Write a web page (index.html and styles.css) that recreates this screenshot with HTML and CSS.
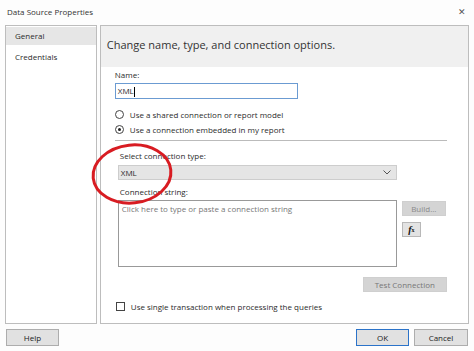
FILE: index.html
```html
<!DOCTYPE html>
<html lang="en">
<head>
    <meta charset="UTF-8">
    <title>Data Source Properties</title>
    <link rel="stylesheet" href="styles.css">
</head>
<body>
    <div class="dialog">
        <div class="title-bar">
            <span class="title">Data Source Properties</span>
            <span class="close">&#x2715;</span>
        </div>
        <div class="main">
            <div class="side">
                <div class="side-item selected">General</div>
                <div class="side-item">Credentials</div>
            </div>
            <div class="content">
                <div class="header">Change name, type, and connection options.</div>
                <div class="body">
                    <div class="label name-label">Name:</div>
                    <div class="name-input">XML<span class="caret"></span></div>
                    <div class="radio-row first"><span class="radio"></span>Use a shared connection or report model</div>
                    <div class="radio-row"><span class="radio checked"></span>Use a connection embedded in my report</div>
                    <div class="separator"></div>
                    <div class="group">
                        <div class="label">Select connection type:</div>
                        <div class="dropdown">
                            <span>XML</span>
                            <svg class="chevron" width="8" height="5" viewBox="0 0 8 5"><path d="M0.5 0.5 L4 4 L7.5 0.5" fill="none" stroke="#555" stroke-width="1"/></svg>
                        </div>
                        <div class="label conn-label">Connection string:</div>
                        <div class="conn-row">
                            <div class="conn-box">Click here to type or paste a connection string</div>
                            <div class="conn-buttons">
                                <div class="btn build">Build...</div>
                                <div class="btn fx"><i>f</i><sub>x</sub></div>
                            </div>
                        </div>
                        <div class="test-row">
                            <div class="btn test">Test Connection</div>
                        </div>
                    </div>
                    <div class="check-row"><span class="check"></span>Use single transaction when processing the queries</div>
                </div>
            </div>
        </div>
        <div class="footer">
            <div class="btn help">Help</div>
            <div class="spacer"></div>
            <div class="btn ok">OK</div>
            <div class="btn cancel">Cancel</div>
        </div>
        <svg class="circle" width="90" height="70" viewBox="0 0 90 70">
            <ellipse cx="45" cy="35" rx="39" ry="29" fill="none" stroke="#d81c22" stroke-width="3" transform="rotate(-6 45 35)"/>
        </svg>
    </div>
</body>
</html>
```

FILE: styles.css
```css
body {
    margin: 0;
    background-color: #ffffff;
    font-family: 'Open Sans', 'Noto Sans', sans-serif;
    font-size: 8px;
    color: #2b2b2b;
}

.dialog {
    position: relative;
    width: 474px;
    height: 351px;
    background-color: #fdfdfd;
}

.title-bar {
    height: 25px;
    display: flex;
    align-items: center;
    justify-content: space-between;
    padding: 0 8px 2px 7px;
    box-sizing: border-box;
}

.title {
    font-size: 8px;
    color: #333;
}

.close {
    font-size: 9px;
    color: #555;
}

.main {
    display: flex;
    gap: 3px;
    padding: 0 5px 0 5px;
    height: 299px;
}

.side {
    width: 90px;
    border: 1px solid #bdbdbd;
    background-color: #fff;
    padding-top: 1px;
}

.side-item {
    height: 18px;
    line-height: 18px;
    padding-left: 9px;
    font-size: 8px;
}

.side-item.selected {
    background-color: #e6e6e6;
    margin-bottom: 3px;
}

.content {
    width: 368px;
    border: 1px solid #bdbdbd;
    background-color: #fff;
}

.header {
    height: 41px;
    background-color: #f0f0f0;
    font-size: 11px;
    color: #333;
    padding-left: 6px;
    line-height: 37px;
    box-sizing: border-box;
}

.body {
    padding: 2px 21px 0 14px;
}

.label {
    font-size: 8px;
    height: 12px;
    line-height: 12px;
}

.name-input {
    width: 179px;
    height: 14px;
    margin-top: 2px;
    border: 1px solid #6b9bd2;
    font-size: 8px;
    line-height: 14px;
    padding-left: 2px;
}

.caret {
    display: inline-block;
    width: 1px;
    height: 10px;
    background-color: #000;
    vertical-align: middle;
}

.radio-row {
    display: flex;
    align-items: center;
    height: 15px;
    font-size: 8px;
}

.radio-row.first {
    margin-top: 8px;
}

.radio {
    width: 9px;
    height: 9px;
    border: 1px solid #444;
    border-radius: 50%;
    margin-right: 6px;
    box-sizing: border-box;
    position: relative;
}

.radio.checked::after {
    content: "";
    position: absolute;
    left: 2px;
    top: 2px;
    width: 3px;
    height: 3px;
    border-radius: 50%;
    background-color: #222;
}

.separator {
    height: 1px;
    background-color: #bbb;
    margin-top: 3px;
    width: 332px;
}

.group {
    padding-left: 3px;
    margin-top: 9px;
}

.group .label {
    padding-left: 2px;
}

.dropdown {
    width: 279px;
    height: 15px;
    margin-top: 3px;
    background-color: #e5e5e5;
    border: 1px solid #cdcdcd;
    display: flex;
    align-items: center;
    justify-content: space-between;
    padding: 0 5px 0 2px;
    font-size: 8px;
    box-sizing: border-box;
}

.conn-label {
    margin-top: 6px;
}

.conn-row {
    display: flex;
    gap: 5px;
    margin-top: 2px;
}

.conn-box {
    width: 279px;
    height: 67px;
    border: 1px solid #999;
    padding: 2px 3px;
    color: #777;
    font-size: 8px;
    box-sizing: border-box;
}

.conn-buttons {
    display: flex;
    flex-direction: column;
    gap: 6px;
    padding-top: 1px;
}

.btn {
    background-color: #dcdcdc;
    border: 1px solid #cfcfcf;
    display: flex;
    align-items: center;
    justify-content: center;
    font-size: 8px;
    box-sizing: border-box;
}

.build {
    width: 44px;
    height: 15px;
    color: #8a8a8a;
    background-color: #d4d4d4;
}

.fx {
    width: 19px;
    height: 15px;
    background-color: #e3e3e3;
    border-color: #b8b8b8;
    font-family: 'Liberation Serif', serif;
    font-weight: bold;
    font-size: 10px;
    color: #111;
}

.fx sub {
    font-size: 6px;
}

.test-row {
    display: flex;
    justify-content: flex-end;
    margin-top: 10px;
    width: 329px;
}

.test {
    width: 84px;
    height: 15px;
    color: #777;
    background-color: #d4d4d4;
}

.check-row {
    display: flex;
    align-items: center;
    margin-top: 9px;
    font-size: 8px;
}

.check {
    width: 9px;
    height: 9px;
    border: 1px solid #444;
    box-sizing: border-box;
    margin-right: 6px;
    margin-left: 1px;
}

.footer {
    display: flex;
    padding: 5px 6px 0 6px;
    gap: 5px;
}

.spacer {
    flex: 1;
}

.help, .ok, .cancel {
    height: 17px;
    color: #222;
    background-color: #e1e1e1;
    border-color: #adadad;
}

.help {
    width: 53px;
}

.ok {
    width: 53px;
    border: 1px solid #2b73c9;
}

.cancel {
    width: 54px;
}

.circle {
    position: absolute;
    left: 87px;
    top: 139px;
}
```
